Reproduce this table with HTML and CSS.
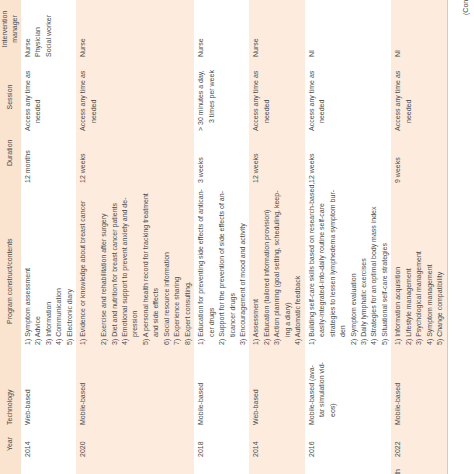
FILE: index.html
```html
<!DOCTYPE html>
<html lang="en">
<head>
<meta charset="utf-8">
<title>Interventions table</title>
<link rel="stylesheet" href="styles.css">
</head>
<body>
<div class="sheet">
  <div class="table">
    <div class="row row--head">
      <div class="hcell"></div>
      <div class="hcell hcell--center">Year</div>
      <div class="hcell hcell--tech">Technology</div>
      <div class="hcell hcell--prog">Program construct/contents</div>
      <div class="hcell hcell--dur">Duration</div>
      <div class="hcell hcell--center">Session</div>
      <div class="hcell hcell--center">Intervention<br>manager</div>
    </div>

    <div class="row">
      <div class="cell cell--ref"></div>
      <div class="cell">2014</div>
      <div class="cell"><p class="item">Web-based</p></div>
      <div class="cell">
        <p class="item">1) Symptom assessment</p>
        <p class="item">2) Advice</p>
        <p class="item">3) Information</p>
        <p class="item">4) Communication</p>
        <p class="item">5) Electronic diary</p>
      </div>
      <div class="cell">12 months</div>
      <div class="cell"><p class="item">Access any time as<br>needed</p></div>
      <div class="cell">
        <p class="item">Nurse</p>
        <p class="item">Physician</p>
        <p class="item">Social worker</p>
      </div>
    </div>

    <div class="row row--shaded">
      <div class="cell cell--ref"></div>
      <div class="cell">2020</div>
      <div class="cell"><p class="item">Mobile-based</p></div>
      <div class="cell">
        <p class="item">1) Evidence or knowledge about breast cancer</p>
        <p class="item">&nbsp;</p>
        <p class="item">2) Exercise and rehabilitation after surgery</p>
        <p class="item">3) Diet and nutrition for breast cancer patients</p>
        <p class="item">4) Emotional support to prevent anxiety and de-<br>pression</p>
        <p class="item">5) A personal health record for tracking treatment<br>and side effects</p>
        <p class="item">6) Social resource information</p>
        <p class="item">7) Experience sharing</p>
        <p class="item">8) Expert consulting.</p>
      </div>
      <div class="cell">12 weeks</div>
      <div class="cell"><p class="item">Access any time as<br>needed</p></div>
      <div class="cell"><p class="item">Nurse</p></div>
    </div>

    <div class="row">
      <div class="cell cell--ref"></div>
      <div class="cell">2018</div>
      <div class="cell"><p class="item">Mobile-based</p></div>
      <div class="cell">
        <p class="item">1) Education for preventing side effects of antican-<br>cer drugs</p>
        <p class="item">2) Support for the prevention of side effects of an-<br>ticancer drugs</p>
        <p class="item">3) Encouragement of mood and activity</p>
      </div>
      <div class="cell">3 weeks</div>
      <div class="cell"><p class="item">&gt; 30 minutes a day,<br>3 times per week</p></div>
      <div class="cell"><p class="item">Nurse</p></div>
    </div>

    <div class="row row--shaded">
      <div class="cell cell--ref"></div>
      <div class="cell">2014</div>
      <div class="cell"><p class="item">Web-based</p></div>
      <div class="cell">
        <p class="item">1) Assessment</p>
        <p class="item">2) Education (tailored information provision)</p>
        <p class="item">3) Action planning (goal setting, scheduling, keep-<br>ing a diary)</p>
        <p class="item">4) Automatic feedback</p>
      </div>
      <div class="cell">12 weeks</div>
      <div class="cell"><p class="item">Access any time as<br>needed</p></div>
      <div class="cell"><p class="item">Nurse</p></div>
    </div>

    <div class="row">
      <div class="cell cell--ref"></div>
      <div class="cell">2016</div>
      <div class="cell"><p class="item">Mobile-based (ava-<br>tar simulation vid-<br>eos)</p></div>
      <div class="cell">
        <p class="item">1) Building self-care skills based on research-based,<br>easily-integrated-into-daily routine self-care<br>strategies to lessen lymphedema symptom bur-<br>den</p>
        <p class="item">2) Symptom evaluation</p>
        <p class="item">3) Daily lymphatic exercises</p>
        <p class="item">4) Strategies for an optimal body mass index</p>
        <p class="item">5) Situational self-care strategies</p>
      </div>
      <div class="cell">12 weeks</div>
      <div class="cell"><p class="item">Access any time as<br>needed</p></div>
      <div class="cell"><p class="item">NI</p></div>
    </div>

    <div class="row row--shaded row--last">
      <div class="cell cell--ref">Smith</div>
      <div class="cell">2022</div>
      <div class="cell"><p class="item">Mobile-based</p></div>
      <div class="cell">
        <p class="item">1) Information acquisition</p>
        <p class="item">2) Lifestyle management</p>
        <p class="item">3) Psychological management</p>
        <p class="item">4) Symptom management</p>
        <p class="item">5) Change compatibility</p>
      </div>
      <div class="cell">9 weeks</div>
      <div class="cell"><p class="item">Access any time as<br>needed</p></div>
      <div class="cell"><p class="item">NI</p></div>
    </div>
  </div>
  <p class="note">(Continued)</p>
</div>
</body>
</html>
```

FILE: styles.css
```css
html, body {
  margin: 0;
  padding: 0;
  width: 474px;
  height: 474px;
  overflow: hidden;
  background: #ffffff;
}

body {
  font-family: "Liberation Sans", Arial, sans-serif;
  font-size: 7px;
  line-height: 10.46px;
  color: #4a4a4a;
}

/* the page is printed sideways: lay it out upright, then turn it */
.sheet {
  width: 474px;
  height: 474px;
  transform: rotate(-90deg);
}

.table {
  margin-left: -40px;
  width: 516px;
  border-bottom: 1px solid #f0c39c;
}

.row {
  display: grid;
  grid-template-columns: 54px 32px 80px 162px 52px 74px 62px;
}

.row--head {
  background: #fae3cf;
  align-items: center;
}

.row--shaded {
  background: #fdecde;
}

.hcell {
  white-space: nowrap;
  padding: 0;
}

.hcell--center {
  text-align: center;
}

.hcell--tech {
  padding-left: 3px;
}

.hcell--prog {
  padding-left: 24px;
}

.hcell--dur {
  padding-left: 20px;
}

.cell {
  padding: 2px 0 1px 3px;
  white-space: nowrap;
}

.cell--ref {
  text-align: right;
  padding-right: 9px;
}

.item {
  margin: 0;
  padding-left: 8px;
  text-indent: -8px;
}

.note {
  margin: 13px 0 0;
  padding-left: 459px;
  white-space: nowrap;
}
```
